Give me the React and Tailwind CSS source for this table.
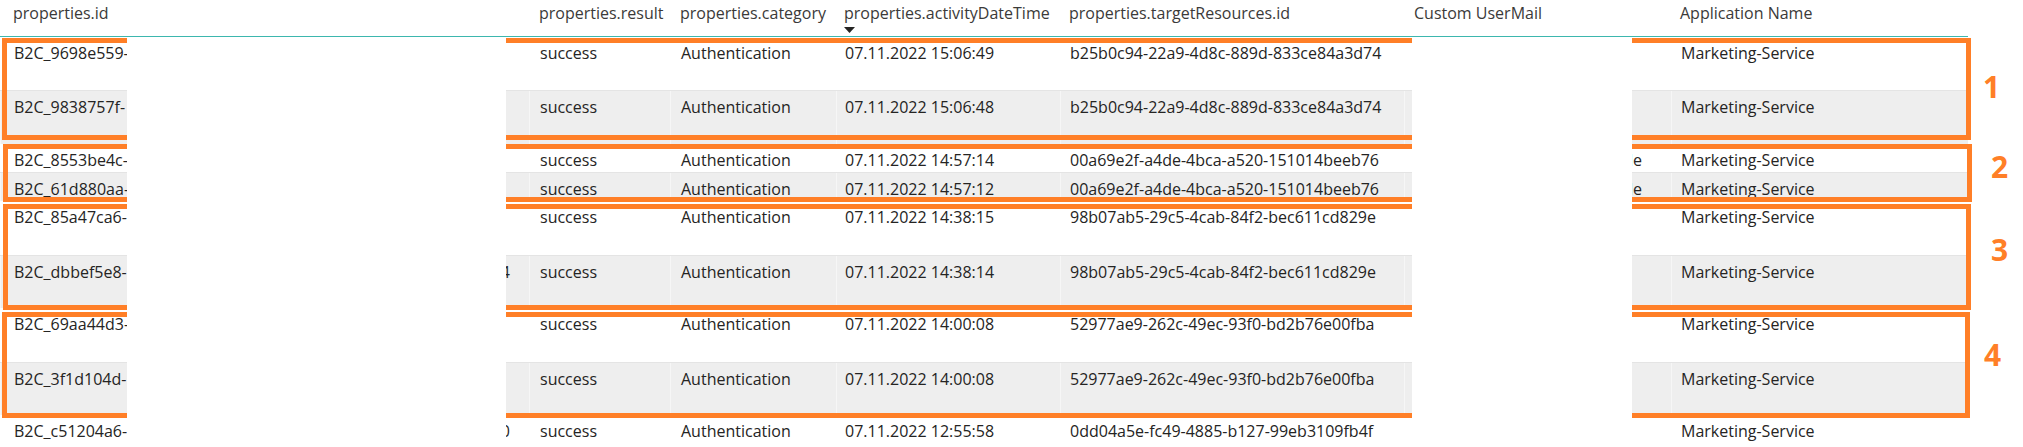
import React from "react";

const rows = [
  { id: "B2C_9698e559-", date: "07.11.2022 15:06:49", target: "b25b0c94-22a9-4d8c-889d-833ce84a3d74", h: "h-[53px]" },
  { id: "B2C_9838757f-", date: "07.11.2022 15:06:48", target: "b25b0c94-22a9-4d8c-889d-833ce84a3d74", h: "h-[54px]" },
  { id: "B2C_8553be4c-", date: "07.11.2022 14:57:14", target: "00a69e2f-a4de-4bca-a520-151014beeb76", h: "h-[28px]", mail: "user@service.de" },
  { id: "B2C_61d880aa-", date: "07.11.2022 14:57:12", target: "00a69e2f-a4de-4bca-a520-151014beeb76", h: "h-[29px]", mail: "user@service.de" },
  { id: "B2C_85a47ca6-", date: "07.11.2022 14:38:15", target: "98b07ab5-29c5-4cab-84f2-bec611cd829e", h: "h-[54px]" },
  { id: "B2C_dbbef5e8-", date: "07.11.2022 14:38:14", target: "98b07ab5-29c5-4cab-84f2-bec611cd829e", h: "h-[53px]", tail: "4" },
  { id: "B2C_69aa44d3-", date: "07.11.2022 14:00:08", target: "52977ae9-262c-49ec-93f0-bd2b76e00fba", h: "h-[54px]" },
  { id: "B2C_3f1d104d-", date: "07.11.2022 14:00:08", target: "52977ae9-262c-49ec-93f0-bd2b76e00fba", h: "h-[53px]" },
  { id: "B2C_c51204a6-", date: "07.11.2022 12:55:58", target: "0dd04a5e-fc49-4885-b127-99eb3109fb4f", h: "h-[54px]", tail: "0" },
];

// annotation boxes drawn over the table
const marks = [
  { box: "left-[2px] top-[38px] w-[1969px] h-[102px]", num: "left-[1983px] top-[72px]", label: "1" },
  { box: "left-[3px] top-[144px] w-[1969px] h-[58px]", num: "left-[1991px] top-[152px]", label: "2" },
  { box: "left-[3px] top-[204px] w-[1968px] h-[106px]", num: "left-[1991px] top-[235px]", label: "3" },
  { box: "left-[2px] top-[312px] w-[1968px] h-[106px]", num: "left-[1984px] top-[340px]", label: "4" },
];

const Head = ({ className, children }) => (
  <div className={`shrink-0 whitespace-nowrap pt-[2px] ${className}`}>{children}</div>
);

const Cell = ({ className, children }) => (
  <div className={`shrink-0 whitespace-nowrap border-l pt-[5px] ${className}`}>{children}</div>
);

export default function App() {
  return (
    <div className="relative h-[447px] w-[2023px] overflow-hidden bg-white font-['Open_Sans','Noto_Sans',sans-serif] text-[16px] leading-[22px] text-[#252423]">
      <div className="flex w-[1968px] flex-col">
        <div className="flex h-[37px] border-b border-[#3db7ae] text-[#3b3a39]">
          <Head className="w-[529px] pl-[13px]">properties.id</Head>
          <Head className="w-[141px] pl-[10px]">properties.result</Head>
          <Head className="w-[166px] pl-[10px]">properties.category</Head>
          <Head className="w-[224px] pl-[8px]">
            <div>properties.activityDateTime</div>
            <svg width="11" height="6" viewBox="0 0 11 6" className="mt-[3px] block">
              <polygon points="0,0 11,0 5.5,6" fill="#252423" />
            </svg>
          </Head>
          <Head className="w-[344px] pl-[9px]">properties.targetResources.id</Head>
          <Head className="w-[267px] pl-[10px]">Custom UserMail</Head>
          <Head className="w-[297px] pl-[9px]">Application Name</Head>
        </div>

        {rows.map((r, i) => {
          const alt = i % 2 === 1;
          const edge = alt ? "border-[#f6f6f6]" : "border-white";
          return (
            <div
              key={i}
              className={`flex ${r.h} ${alt ? "border-t border-[#e4e4e4] bg-[#eeeeee]" : "bg-white"}`}
            >
              <Cell className={`flex w-[529px] justify-between pl-[13px] pr-[19px] ${edge}`}>
                <span>{r.id}</span>
                {r.tail && <span>{r.tail}</span>}
              </Cell>
              <Cell className={`w-[141px] pl-[10px] ${edge}`}>success</Cell>
              <Cell className={`w-[166px] pl-[10px] ${edge}`}>Authentication</Cell>
              <Cell className={`w-[224px] pl-[8px] ${edge}`}>{r.date}</Cell>
              <Cell className={`w-[344px] pl-[9px] ${edge}`}>{r.target}</Cell>
              <Cell className={`flex w-[267px] justify-end pl-[10px] pr-[29px] ${edge}`}>
                {r.mail && <span>{r.mail}</span>}
              </Cell>
              <Cell className={`w-[297px] pl-[9px] ${edge}`}>Marketing-Service</Cell>
            </div>
          );
        })}
      </div>

      {marks.map((m) => (
        <div key={m.label} className={`absolute border-[5px] border-[#ff7f27] ${m.box}`} />
      ))}

      {/* blanked out columns */}
      <div className="absolute left-[127px] top-[37px] h-[410px] w-[379px] bg-white" />
      <div className="absolute left-[1412px] top-[37px] h-[410px] w-[220px] bg-white" />

      {marks.map((m) => (
        <div
          key={m.label}
          className={`absolute text-[30px] font-bold leading-none text-[#ff7f27] ${m.num}`}
        >
          {m.label}
        </div>
      ))}
    </div>
  );
}
